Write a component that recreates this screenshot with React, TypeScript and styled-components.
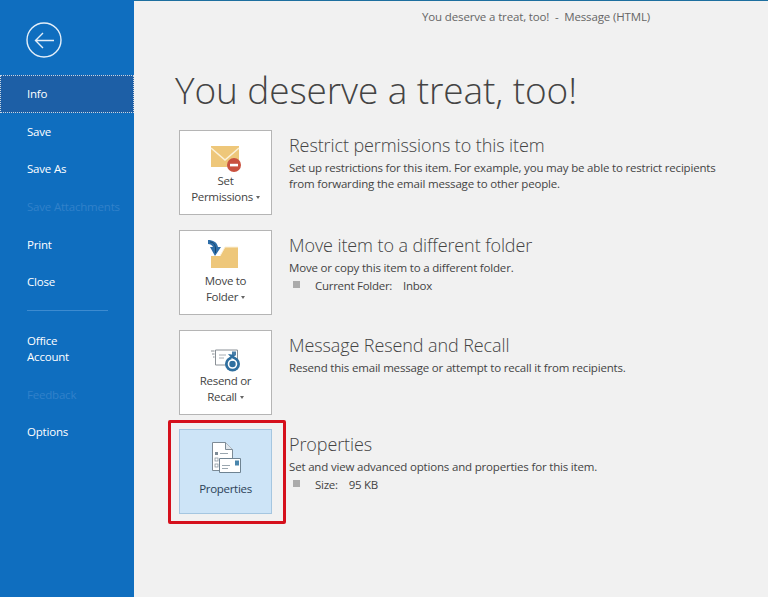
import * as React from 'react'
import styled, { createGlobalStyle } from 'styled-components'

const GlobalStyle = createGlobalStyle`
  html, body {
    margin: 0;
    padding: 0;
    background: #f1f1f1;
  }
  * {
    box-sizing: border-box;
  }
`

const Page = styled.div`
  display: flex;
  width: 768px;
  height: 597px;
  overflow: hidden;
  font-family: 'Open Sans', 'Noto Sans', sans-serif;
  background: #f1f1f1;
`

const Sidebar = styled.nav`
  width: 134px;
  flex: none;
  background: #0f6ebf;
  padding-top: 22px;
  color: #fff;
`

const BackButton = styled.div`
  margin: 0 0 17px 26px;
  width: 36px;
  height: 36px;
`

const NavItem = styled.div<{ $active?: boolean; $disabled?: boolean }>`
  display: flex;
  align-items: center;
  height: 37.6px;
  padding-left: 27px;
  font-size: 11.5px;
  letter-spacing: -0.2px;
  color: ${p => (p.$disabled ? '#3181ca' : '#fff')};
  ${p =>
    p.$active &&
    `
    background: #1d5fa6;
    border: 1px dotted #c9d6e4;
    padding-left: 26px;
  `}
`

const NavBlock = styled(NavItem)`
  height: auto;
  padding-top: 7px;
  padding-bottom: 11px;
  line-height: 16px;
`

const Divider = styled.hr`
  margin: 9px 26px 15px 27px;
  height: 1px;
  border: 0;
  background: #3d8bd0;
`

const Main = styled.main`
  flex: 1;
  border-top: 1px solid #1d6f9f;
`

const TitleBar = styled.div`
  height: 32px;
  padding: 9px 0 0 288px;
  font-size: 11.5px;
  line-height: 14px;
  letter-spacing: -0.14px;
  color: #666;
`

const Title = styled.h1`
  margin: 0 0 18px 41px;
  height: 79px;
  padding-top: 33px;
  font-size: 37px;
  font-weight: 300;
  line-height: 48px;
  letter-spacing: -0.1px;
  color: #444;
`

const Sections = styled.div`
  display: flex;
  flex-direction: column;
  gap: 14.8px;
  margin-left: 45px;
`

const Section = styled.section`
  display: flex;
  gap: 17px;
`

const ActionButton = styled.div<{ $selected?: boolean }>`
  position: relative;
  display: flex;
  flex-direction: column;
  align-items: center;
  flex: none;
  width: 93px;
  height: 85px;
  padding-top: 12px;
  border: 1px solid ${p => (p.$selected ? '#a5c6e0' : '#b5b5b5')};
  background: ${p => (p.$selected ? '#cde4f7' : '#fff')};
`

const ButtonIcon = styled.svg`
  display: block;
  flex: none;
`

const RaisedIcon = styled(ButtonIcon)`
  margin-top: -3px;
`

const ButtonLabel = styled.div<{ $selected?: boolean }>`
  margin-top: ${p => (p.$selected ? '8px' : '1px')};
  font-size: 11.5px;
  font-weight: ${p => (p.$selected ? 500 : 400)};
  line-height: 16px;
  letter-spacing: -0.3px;
  text-align: center;
  color: ${p => (p.$selected ? '#2c4257' : '#444')};
`

const Caret = styled.span`
  display: inline-block;
  margin-left: 3px;
  vertical-align: 2px;
  border-left: 2.5px solid transparent;
  border-right: 2.5px solid transparent;
  border-top: 3px solid #666;
`

const Highlight = styled.div`
  position: absolute;
  left: -12px;
  top: -10px;
  width: 118px;
  height: 104px;
  border: 3px solid #d5101c;
  border-radius: 2px;
  pointer-events: none;
`

const Details = styled.div`
  padding-top: 3px;
`

const Heading = styled.h2`
  margin: 0 0 2px;
  font-size: 18px;
  font-weight: 300;
  line-height: 25px;
  letter-spacing: -0.1px;
  color: #444;
`

const Description = styled.p`
  margin: 0;
  width: 440px;
  font-size: 11.5px;
  line-height: 16px;
  letter-spacing: -0.18px;
  color: #444;
`

const Fact = styled.div`
  display: flex;
  align-items: center;
  margin-top: 2px;
  padding-left: 4px;
  font-size: 11.5px;
  line-height: 16px;
  letter-spacing: -0.28px;
  color: #444;
`

const Bullet = styled.span`
  width: 7px;
  height: 7px;
  margin-right: 15px;
  margin-top: -3px;
  background: #ababab;
`

const FactName = styled.span`
  margin-right: 11px;
`

const BackIcon = () => (
  <svg width="36" height="36" viewBox="0 0 36 36" fill="none" stroke="#e4eff9" strokeWidth="1.4">
    <circle cx="18" cy="18" r="17" />
    <path d="M28 18.5H9.5M17 11l-7.5 7.5L17 26" />
  </svg>
)

const PermissionsIcon = () => (
  <ButtonIcon width="31" height="29" viewBox="0 0 31 29">
    <path d="M1 3h28v21H1z" fill="#eec77a" />
    <path d="M1 5l14 12L29 5" fill="none" stroke="#fbf1d9" strokeWidth="1.6" />
    <circle cx="24" cy="22" r="7" fill="#c9513f" />
    <rect x="20" y="20.800" width="8" height="2.600" fill="#fff" />
  </ButtonIcon>
)

const MoveIcon = () => (
  <RaisedIcon width="35" height="32" viewBox="0 0 35 32">
    <path d="M3 16h9l5-9h13v21H3z" fill="#eec77a" />
    <path d="M12 16l5-9h13" fill="none" stroke="#fbf1d9" strokeWidth="1" />
    <path d="M0 0c5 0 9 2 10 7h3l-6 9-5-9h3C4 5 2 4 0 4z" fill="#2d6da8" />
    <path d="M2 2c3 0 5 2 5.500 6v5" fill="none" stroke="#16466f" strokeWidth="1" />
  </RaisedIcon>
)

const ResendIcon = () => (
  <ButtonIcon width="32" height="29" viewBox="0 0 32 29">
    <path d="M5.500 7h22v15h-22z" fill="#fff" stroke="#8a9096" />
    <path d="M9 12h7M9 15h5" stroke="#a8aeb4" />
    <path d="M1 8h3.500M2 11h2.500M3 14h1.500" stroke="#8a9096" />
    <rect x="22" y="8.500" width="4" height="4" fill="#4a7fa8" />
    <circle cx="22.500" cy="21" r="7.500" fill="#2f6f9f" />
    <circle cx="22.500" cy="21" r="4" fill="none" stroke="#fff" strokeWidth="1.600" />
    <path d="M18 11l7 1-2 5z" fill="#2f6f9f" />
    <path d="M21.500 15l3 1.500-3 1.500z" fill="#fff" />
  </ButtonIcon>
)

const PropertiesIcon = () => (
  <ButtonIcon width="33" height="31" viewBox="0 0 33 31">
    <path d="M3.500.5h13l7 7v21h-20z" fill="#fff" stroke="#7d8b96" />
    <path d="M16.500.5v7h7" fill="#dfe6ec" stroke="#7d8b96" />
    <rect x="6" y="10" width="3" height="3" fill="#7d8b96" />
    <rect x="6" y="16" width="3" height="3" fill="#fff" stroke="#7d8b96" strokeWidth=".7" />
    <rect x="6" y="22" width="3" height="3" fill="#fff" stroke="#7d8b96" strokeWidth=".7" />
    <path d="M11 11.500h8" stroke="#9aa6af" />
    <path d="M10.500 16.500h21v14h-21z" fill="#fff" stroke="#6f8392" />
    <rect x="26" y="18.500" width="4" height="5" fill="#4a86ad" />
    <path d="M13 23.500h8M13 26.500h6" stroke="#9aa6af" />
  </ButtonIcon>
)

export default function App() {
  return (
    <Page>
      <GlobalStyle />
      <Sidebar>
        <BackButton>
          <BackIcon />
        </BackButton>
        <NavItem $active>Info</NavItem>
        <NavItem>Save</NavItem>
        <NavItem>Save As</NavItem>
        <NavItem $disabled>Save Attachments</NavItem>
        <NavItem>Print</NavItem>
        <NavItem>Close</NavItem>
        <Divider />
        <NavBlock>
          Office
          <br />
          Account
        </NavBlock>
        <NavItem $disabled>Feedback</NavItem>
        <NavItem>Options</NavItem>
      </Sidebar>
      <Main>
        <TitleBar>You deserve a treat, too!&nbsp; -&nbsp; Message (HTML)</TitleBar>
        <Title>You deserve a treat, too!</Title>
        <Sections>
          <Section>
            <ActionButton>
              <PermissionsIcon />
              <ButtonLabel>
                Set
                <br />
                Permissions
                <Caret />
              </ButtonLabel>
            </ActionButton>
            <Details>
              <Heading>Restrict permissions to this item</Heading>
              <Description>
                Set up restrictions for this item. For example, you may be able to restrict recipients
                from forwarding the email message to other people.
              </Description>
            </Details>
          </Section>
          <Section>
            <ActionButton>
              <MoveIcon />
              <ButtonLabel>
                Move to
                <br />
                Folder
                <Caret />
              </ButtonLabel>
            </ActionButton>
            <Details>
              <Heading>Move item to a different folder</Heading>
              <Description>Move or copy this item to a different folder.</Description>
              <Fact>
                <Bullet />
                <FactName>Current Folder:</FactName>
                Inbox
              </Fact>
            </Details>
          </Section>
          <Section>
            <ActionButton>
              <ResendIcon />
              <ButtonLabel>
                Resend or
                <br />
                Recall
                <Caret />
              </ButtonLabel>
            </ActionButton>
            <Details>
              <Heading>Message Resend and Recall</Heading>
              <Description>Resend this email message or attempt to recall it from recipients.</Description>
            </Details>
          </Section>
          <Section>
            <ActionButton $selected>
              <PropertiesIcon />
              <ButtonLabel $selected>Properties</ButtonLabel>
              <Highlight />
            </ActionButton>
            <Details>
              <Heading>Properties</Heading>
              <Description>Set and view advanced options and properties for this item.</Description>
              <Fact>
                <Bullet />
                <FactName>Size:</FactName>
                95 KB
              </Fact>
            </Details>
          </Section>
        </Sections>
      </Main>
    </Page>
  )
}
